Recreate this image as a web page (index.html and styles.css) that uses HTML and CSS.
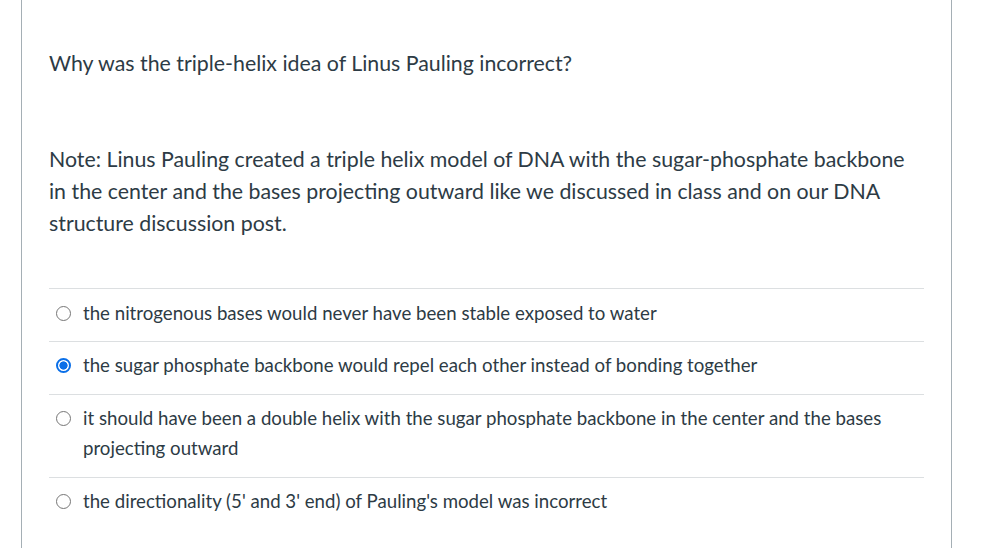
FILE: index.html
```html
<!DOCTYPE html>
<html>
<head>
<meta charset="utf-8">
<link rel="stylesheet" href="styles.css">
</head>
<body>
<div class="question">
  <div class="question-text">
    <p class="q-title">Why was the triple-helix idea of Linus Pauling incorrect?</p>
    <p class="q-note">Note: Linus Pauling created a triple helix model of DNA with the sugar-phosphate backbone in the center and the bases projecting outward like we discussed in class and on our DNA structure discussion post.</p>
  </div>
  <div class="answers">
    <label class="answer"><span class="radio"></span><span class="answer-text">the nitrogenous bases would never have been stable exposed to water</span></label>
    <label class="answer"><span class="radio checked"></span><span class="answer-text">the sugar phosphate backbone would repel each other instead of bonding together</span></label>
    <label class="answer"><span class="radio"></span><span class="answer-text">it should have been a double helix with the sugar phosphate backbone in the center and the bases projecting outward</span></label>
    <label class="answer"><span class="radio"></span><span class="answer-text">the directionality (5' and 3' end) of Pauling's model was incorrect</span></label>
  </div>
</div>
</body>
</html>
```

FILE: styles.css
```css
html, body {
  margin: 0;
  padding: 0;
  background: #ffffff;
}
body {
  font-family: Lato, "Noto Sans", "Liberation Sans", sans-serif;
  color: #2d3b45;
  padding-left: 21px;
  width: 931px;
  height: 548px;
  overflow: hidden;
}
.question {
  border-left: 1px solid #a5afb5;
  border-right: 1px solid #a5afb5;
  height: 548px;
  box-sizing: border-box;
  padding: 0 27px 0 27px;
}
.question-text {
  padding-top: 47px;
}
.q-title {
  margin: 0;
  font-size: 21.33px;
  line-height: 32px;
}
.q-note {
  margin: 64px 0 0 0;
  font-size: 21.33px;
  line-height: 32px;
}
.answers {
  margin-top: 49px;
}
.answer {
  display: flex;
  align-items: flex-start;
  border-top: 1px solid #dcdfe1;
  padding: 9.5px 0 12.5px 7px;
  font-size: 18.67px;
  line-height: 29.87px;
}
.radio {
  flex: none;
  width: 15px;
  height: 15px;
  box-sizing: border-box;
  border: 1px solid #767676;
  border-radius: 50%;
  margin-top: 7px;
  margin-right: 12px;
}
.radio.checked {
  border: 2px solid #0a6fe8;
  background: radial-gradient(circle, #0a6fe8 0 3.8px, #ffffff 4.4px);
}
.answer-text {
  flex: 1;
}
```
